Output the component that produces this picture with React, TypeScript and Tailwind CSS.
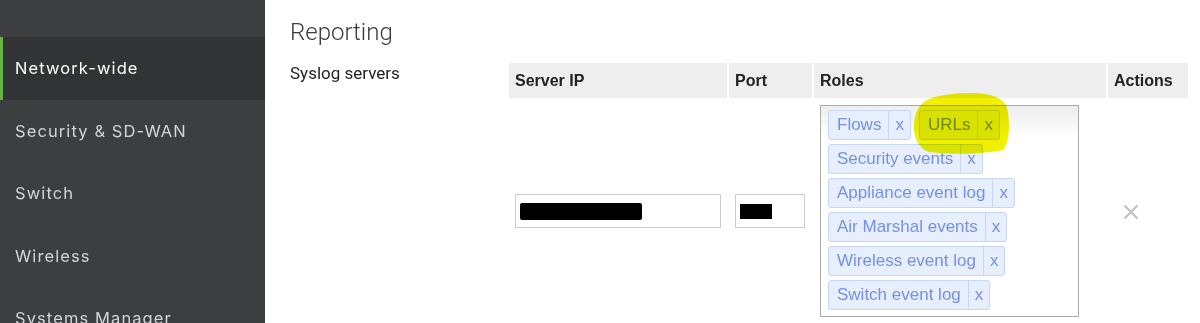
import React from "react";

const NAV_ITEMS = ["Network-wide", "Security & SD-WAN", "Switch", "Wireless", "Systems Manager"];
const ROLES = [
  "Flows",
  "URLs",
  "Security events",
  "Appliance event log",
  "Air Marshal events",
  "Wireless event log",
  "Switch event log",
];

function Sidebar() {
  return (
    <aside className="flex w-[265px] shrink-0 flex-col bg-[#3d3e40] font-['Inter',sans-serif] text-[16.5px] tracking-[1.1px]">
      <div className="h-[37px] shrink-0" />
      {NAV_ITEMS.map((item, i) => (
        <div
          key={item}
          className={
            i === 0
              ? "flex h-[63px] shrink-0 items-center border-l-[3px] border-[#67b346] bg-[#323335] pl-[12px] text-white"
              : "flex h-[62.5px] shrink-0 items-center pl-[15px] text-[#d3d4d6]"
          }
        >
          {item}
        </div>
      ))}
    </aside>
  );
}

// yellow marker scribble from the original screenshot
function Highlight() {
  return (
    <svg
      className="pointer-events-none absolute left-[-7px] top-[-18px] z-10 mix-blend-multiply"
      width="98"
      height="62"
      viewBox="0 0 98 62"
    >
      <path
        d="M8 12 C 14 3, 38 0, 60 0 C 82 1, 94 6, 95 20 C 97 34, 96 50, 90 57 C 70 61, 40 62, 16 59 C 5 55, 0 44, 1 30 C 2 22, 4 16, 8 12 Z"
        fill="#f0f000"
      />
    </svg>
  );
}

function RoleTag({ label, marked }: { label: string; marked?: boolean }) {
  return (
    <div className="relative flex h-[30px] items-stretch rounded-[3px] border border-[#c6d6f7] bg-[#e7effe] text-[17px] leading-[18px] text-[#7590e6]">
      <span className="flex items-center pl-[8px] pr-[7px]">{label}</span>
      <span className="flex items-center border-l border-[#c6d6f7] px-[6px]">x</span>
      {marked && <Highlight />}
    </div>
  );
}

function RolesBox() {
  return (
    <div className="w-[259px] border border-[#aaaaaa] bg-[linear-gradient(#eeeeee_1%,#ffffff_15%)] pb-[6px] pl-[7px] pr-[4px] pt-[4px]">
      <div className="flex flex-wrap gap-x-[8px] gap-y-[4px]">
        {ROLES.map((role) => (
          <RoleTag key={role} label={role} marked={role === "URLs"} />
        ))}
      </div>
    </div>
  );
}

function SyslogTable() {
  const headerClass = "flex h-[35px] items-center bg-[#eeeeee] pl-[6px] text-[16px] font-bold text-[#222222]";

  return (
    <div className="grid grid-cols-[218px_83px_292px_80px] gap-x-[2px] gap-y-[7px] font-['Liberation_Sans',Arial,sans-serif]">
      <div className={headerClass}>Server IP</div>
      <div className={headerClass}>Port</div>
      <div className={headerClass}>Roles</div>
      <div className={headerClass}>Actions</div>

      <div className="flex items-center pl-[6px]">
        <div className="flex h-[34px] w-[206px] items-center border border-[#cccccc] bg-white pl-[4px]">
          <div className="h-[17px] w-[122px] rounded-[2px] bg-black" />
        </div>
      </div>
      <div className="flex items-center pl-[6px]">
        <div className="flex h-[34px] w-[70px] items-center border border-[#cccccc] bg-white pl-[4px]">
          <div className="h-[15px] w-[32px] bg-black" />
        </div>
      </div>
      <div className="flex items-start pl-[6px]">
        <RolesBox />
      </div>
      <div className="flex items-center pl-[15px] pt-[2px]">
        <svg width="16" height="16" viewBox="0 0 16 16">
          <path d="M1.5 1.5 L14.5 14.5 M14.5 1.5 L1.5 14.5" stroke="#c2c2c2" strokeWidth="2.4" />
        </svg>
      </div>
    </div>
  );
}

export default function App() {
  return (
    <div className="flex h-screen overflow-hidden bg-white">
      <Sidebar />
      <main className="flex min-w-0 flex-1 flex-col pl-[25px] pt-[18px] font-['Roboto',sans-serif]">
        <h1 className="h-[28px] text-[24px] font-light leading-[28px] text-[#3a3a3a]">Reporting</h1>
        <div className="mt-[17px] flex">
          <div className="w-[219px] shrink-0 text-[17px] leading-[20px] text-[#222222]">Syslog servers</div>
          <SyslogTable />
        </div>
      </main>
    </div>
  );
}
